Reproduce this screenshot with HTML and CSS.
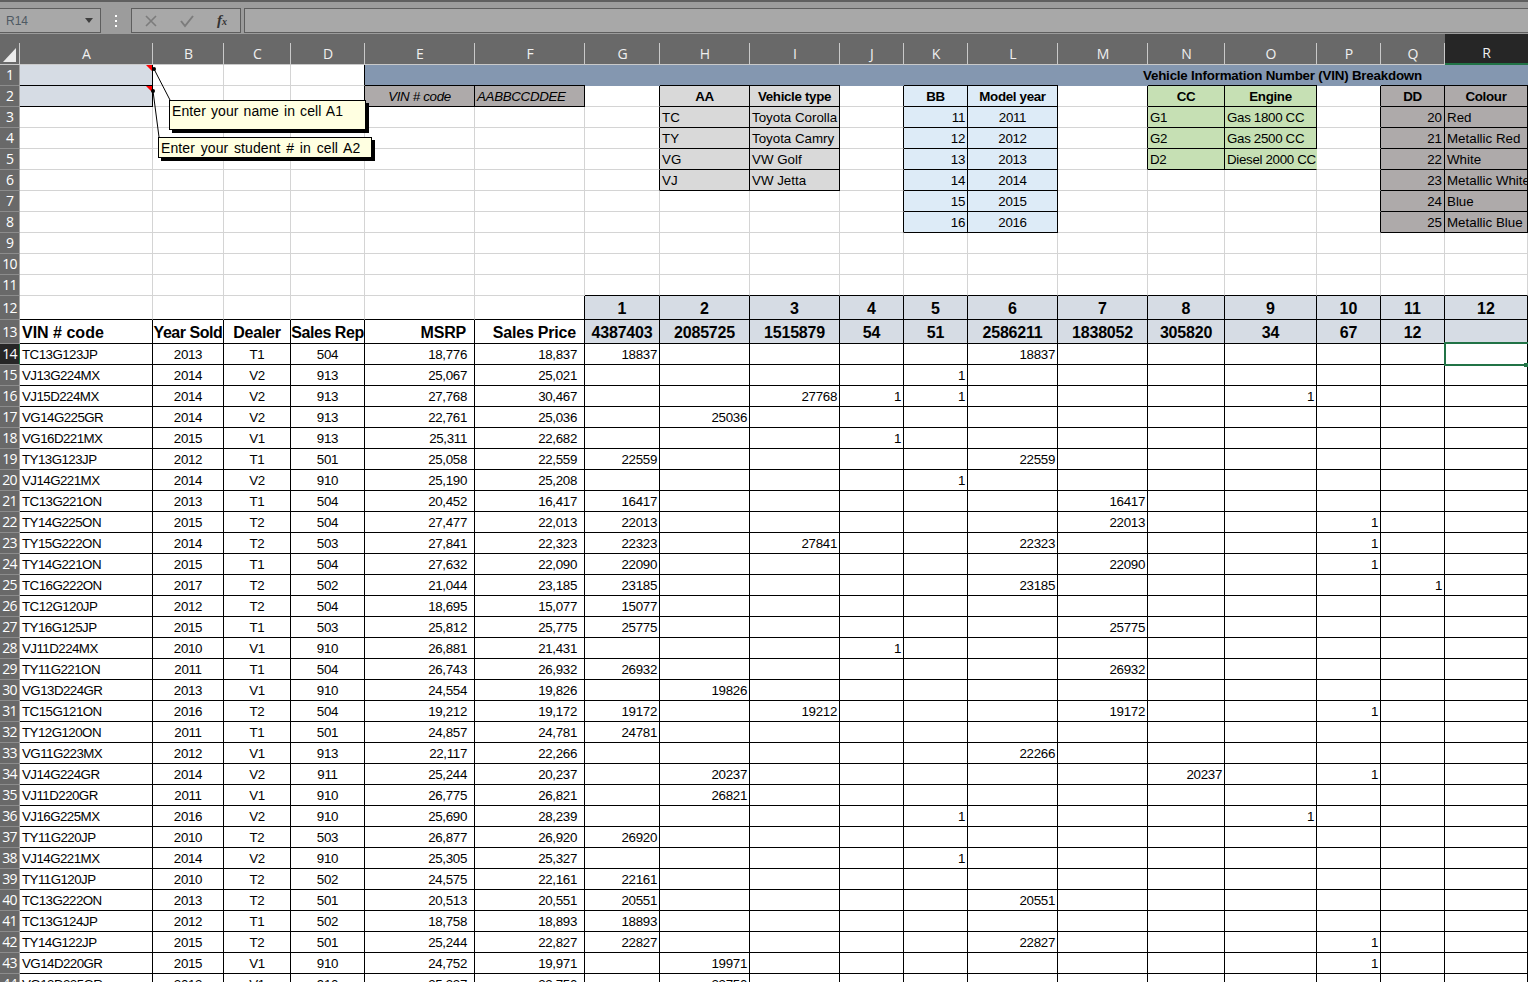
FILE: index.html
```html
<!DOCTYPE html>
<html>
<head>
  <title>VIN Breakdown</title>
  <meta charset="UTF-8">
  <link rel="stylesheet" href="styles.css">
</head>
<body>

<div class="bar">
  <div class="namebox">R14<span class="drop"></span></div>
  <div class="dots"><i></i><i></i><i></i></div>
  <div class="fxbox">
    <svg class="ico" width="14" height="14" viewBox="0 0 14 14"><path d="M2 2l10 10M12 2L2 12" stroke="#7c7c7c" stroke-width="1.6" fill="none"/></svg>
    <svg class="ico" width="16" height="14" viewBox="0 0 16 14"><path d="M2 7l4 5 8-10" stroke="#7c7c7c" stroke-width="2" fill="none"/></svg>
    <span class="fx">f<small>x</small></span>
  </div>
  <div class="formula"></div>
</div>

<div class="sheet">
<table class="grid">
  <colgroup>
    <col class="c20"><col class="c133"><col class="c71"><col class="c67"><col class="c74"><col class="c110"><col class="c110">
    <col class="c75"><col class="c90"><col class="c90"><col class="c64"><col class="c64"><col class="c90"><col class="c90">
    <col class="c77"><col class="c92"><col class="c64"><col class="c64"><col class="c83">
  </colgroup>
  <tr class="head">
    <th class="corner"><svg width="20" height="30" viewBox="0 0 20 30"><path d="M16 14v14H3z" fill="#ececec"/></svg>
    <th>A<th>B<th>C<th>D<th>E<th>F<th>G<th>H<th>I<th>J<th>K<th>L<th>M<th>N<th>O<th>P<th>Q<th class="on">R
  <tr><th>1<td class="ac box"><td><td><td class="r"><td class="band" colspan="14">Vehicle Information Number (VIN) Breakdown
  <tr><th>2<td class="ac box"><td><td><td class="r"><td class="gr box tp it mid">VIN # code<td class="gr box tp it">AABBCCDDEE<td class="r"><td class="si box tp hd">AA<td class="si box tp hd">Vehicle type<td class="r"><td class="bl box tp hd">BB<td class="bl box tp hd">Model year<td class="r"><td class="gn box tp hd">CC<td class="gn box tp hd">Engine<td class="r"><td class="gr box tp hd">DD<td class="gr box tp hd">Colour
  <tr><th>3<td><td><td><td><td><td><td class="r"><td class="si box">TC<td class="si box">Toyota Corolla<td class="r"><td class="bl box num">11<td class="bl box mid">2011<td class="r"><td class="gn box">G1<td class="gn box">Gas 1800 CC<td class="r"><td class="gr box num">20<td class="gr box">Red
  <tr><th>4<td><td><td><td><td><td><td class="r"><td class="si box">TY<td class="si box">Toyota Camry<td class="r"><td class="bl box num">12<td class="bl box mid">2012<td class="r"><td class="gn box">G2<td class="gn box">Gas 2500 CC<td class="r"><td class="gr box num">21<td class="gr box">Metallic Red
  <tr><th>5<td><td><td><td><td><td><td class="r"><td class="si box">VG<td class="si box">VW Golf<td class="r"><td class="bl box num">13<td class="bl box mid">2013<td class="r"><td class="gn box">D2<td class="gn b open">Diesel 2000 CC<td class="r"><td class="gr box num">22<td class="gr box">White
  <tr><th>6<td><td><td><td><td><td><td class="r"><td class="si box">VJ<td class="si box">VW Jetta<td class="r"><td class="bl box num">14<td class="bl box mid">2014<td><td><td><td class="r"><td class="gr box num">23<td class="gr box">Metallic White
  <tr><th>7<td><td><td><td><td><td><td><td><td><td class="r"><td class="bl box num">15<td class="bl box mid">2015<td><td><td><td class="r"><td class="gr box num">24<td class="gr box">Blue
  <tr><th>8<td><td><td><td><td><td><td><td><td><td class="r"><td class="bl box num">16<td class="bl box mid">2016<td><td><td><td class="r"><td class="gr box num">25<td class="gr box">Metallic Blue
  <tr><th>9<td><td><td><td><td><td><td><td><td><td><td><td><td><td><td><td><td><td><td>
  <tr><th>10<td><td><td><td><td><td><td><td><td><td><td><td><td><td><td><td><td><td><td>
  <tr><th>11<td><td><td><td><td><td><td class="b"><td class="b"><td class="b"><td class="b"><td class="b"><td class="b"><td class="b"><td class="b"><td class="b"><td class="b"><td class="b"><td class="b">
  <tr class="tall"><th>12<td class="b"><td class="b"><td class="b"><td class="b"><td class="b"><td class="box"><td class="sum">1<td class="sum">2<td class="sum">3<td class="sum">4<td class="sum">5<td class="sum">6<td class="sum">7<td class="sum">8<td class="sum">9<td class="sum">10<td class="sum">11<td class="sum">12
  <tr class="tall titles"><th>13<td>VIN # code<td>Year Sold<td>Dealer<td>Sales Rep<td>MSRP<td>Sales Price<td class="sum">4387403<td class="sum">2085725<td class="sum">1515879<td class="sum">54<td class="sum">51<td class="sum">2586211<td class="sum">1838052<td class="sum">305820<td class="sum">34<td class="sum">67<td class="sum">12<td class="sum">

  <tr class="rec"><th class="on">14<td>TC13G123JP<td>2013<td>T1<td>504<td>18,776<td>18,837<td>18837<td><td><td><td><td>18837<td><td><td><td><td><td>
  <tr class="rec"><th>15<td>VJ13G224MX<td>2014<td>V2<td>913<td>25,067<td>25,021<td><td><td><td><td>1<td><td><td><td><td><td><td>
  <tr class="rec"><th>16<td>VJ15D224MX<td>2014<td>V2<td>913<td>27,768<td>30,467<td><td><td>27768<td>1<td>1<td><td><td><td>1<td><td><td>
  <tr class="rec"><th>17<td>VG14G225GR<td>2014<td>V2<td>913<td>22,761<td>25,036<td><td>25036<td><td><td><td><td><td><td><td><td><td>
  <tr class="rec"><th>18<td>VG16D221MX<td>2015<td>V1<td>913<td>25,311<td>22,682<td><td><td><td>1<td><td><td><td><td><td><td><td>
  <tr class="rec"><th>19<td>TY13G123JP<td>2012<td>T1<td>501<td>25,058<td>22,559<td>22559<td><td><td><td><td>22559<td><td><td><td><td><td>
  <tr class="rec"><th>20<td>VJ14G221MX<td>2014<td>V2<td>910<td>25,190<td>25,208<td><td><td><td><td>1<td><td><td><td><td><td><td>
  <tr class="rec"><th>21<td>TC13G221ON<td>2013<td>T1<td>504<td>20,452<td>16,417<td>16417<td><td><td><td><td><td>16417<td><td><td><td><td>
  <tr class="rec"><th>22<td>TY14G225ON<td>2015<td>T2<td>504<td>27,477<td>22,013<td>22013<td><td><td><td><td><td>22013<td><td><td>1<td><td>
  <tr class="rec"><th>23<td>TY15G222ON<td>2014<td>T2<td>503<td>27,841<td>22,323<td>22323<td><td>27841<td><td><td>22323<td><td><td><td>1<td><td>
  <tr class="rec"><th>24<td>TY14G221ON<td>2015<td>T1<td>504<td>27,632<td>22,090<td>22090<td><td><td><td><td><td>22090<td><td><td>1<td><td>
  <tr class="rec"><th>25<td>TC16G222ON<td>2017<td>T2<td>502<td>21,044<td>23,185<td>23185<td><td><td><td><td>23185<td><td><td><td><td>1<td>
  <tr class="rec"><th>26<td>TC12G120JP<td>2012<td>T2<td>504<td>18,695<td>15,077<td>15077<td><td><td><td><td><td><td><td><td><td><td>
  <tr class="rec"><th>27<td>TY16G125JP<td>2015<td>T1<td>503<td>25,812<td>25,775<td>25775<td><td><td><td><td><td>25775<td><td><td><td><td>
  <tr class="rec"><th>28<td>VJ11D224MX<td>2010<td>V1<td>910<td>26,881<td>21,431<td><td><td><td>1<td><td><td><td><td><td><td><td>
  <tr class="rec"><th>29<td>TY11G221ON<td>2011<td>T1<td>504<td>26,743<td>26,932<td>26932<td><td><td><td><td><td>26932<td><td><td><td><td>
  <tr class="rec"><th>30<td>VG13D224GR<td>2013<td>V1<td>910<td>24,554<td>19,826<td><td>19826<td><td><td><td><td><td><td><td><td><td>
  <tr class="rec"><th>31<td>TC15G121ON<td>2016<td>T2<td>504<td>19,212<td>19,172<td>19172<td><td>19212<td><td><td><td>19172<td><td><td>1<td><td>
  <tr class="rec"><th>32<td>TY12G120ON<td>2011<td>T1<td>501<td>24,857<td>24,781<td>24781<td><td><td><td><td><td><td><td><td><td><td>
  <tr class="rec"><th>33<td>VG11G223MX<td>2012<td>V1<td>913<td>22,117<td>22,266<td><td><td><td><td><td>22266<td><td><td><td><td><td>
  <tr class="rec"><th>34<td>VJ14G224GR<td>2014<td>V2<td>911<td>25,244<td>20,237<td><td>20237<td><td><td><td><td><td>20237<td><td>1<td><td>
  <tr class="rec"><th>35<td>VJ11D220GR<td>2011<td>V1<td>910<td>26,775<td>26,821<td><td>26821<td><td><td><td><td><td><td><td><td><td>
  <tr class="rec"><th>36<td>VJ16G225MX<td>2016<td>V2<td>910<td>25,690<td>28,239<td><td><td><td><td>1<td><td><td><td>1<td><td><td>
  <tr class="rec"><th>37<td>TY11G220JP<td>2010<td>T2<td>503<td>26,877<td>26,920<td>26920<td><td><td><td><td><td><td><td><td><td><td>
  <tr class="rec"><th>38<td>VJ14G221MX<td>2014<td>V2<td>910<td>25,305<td>25,327<td><td><td><td><td>1<td><td><td><td><td><td><td>
  <tr class="rec"><th>39<td>TY11G120JP<td>2010<td>T2<td>502<td>24,575<td>22,161<td>22161<td><td><td><td><td><td><td><td><td><td><td>
  <tr class="rec"><th>40<td>TC13G222ON<td>2013<td>T2<td>501<td>20,513<td>20,551<td>20551<td><td><td><td><td>20551<td><td><td><td><td><td>
  <tr class="rec"><th>41<td>TC13G124JP<td>2012<td>T1<td>502<td>18,758<td>18,893<td>18893<td><td><td><td><td><td><td><td><td><td><td>
  <tr class="rec"><th>42<td>TY14G122JP<td>2015<td>T2<td>501<td>25,244<td>22,827<td>22827<td><td><td><td><td>22827<td><td><td><td>1<td><td>
  <tr class="rec"><th>43<td>VG14D220GR<td>2015<td>V1<td>910<td>24,752<td>19,971<td><td>19971<td><td><td><td><td><td><td><td>1<td><td>
  <tr class="rec"><th>44<td>VG13D225GR<td>2013<td>V1<td>910<td>25,337<td>23,750<td><td>23750<td><td><td><td><td><td><td><td><td><td>
</table>

<!-- comment flags and their leader lines, coordinates are page pixels -->
<svg class="marks" width="400" height="170" viewBox="0 0 400 170">
  <path d="M146 65h6v6zM146 86h6v6z" fill="#f00"/>
  <path d="M154 69L170 100M153 91L159 137" stroke="#000" stroke-width="1" fill="none"/>
  <circle cx="154" cy="69" r="2" fill="#000"/>
  <circle cx="153" cy="91" r="2" fill="#000"/>
</svg>
<div class="note note1">Enter your name in cell A1</div>
<div class="note note2">Enter your student # in cell A2</div>
<div class="cursor"><span class="handle"></span></div>
</div>

</body>
</html>
```

FILE: styles.css
```css
html, body {
  margin: 0;
  padding: 0;
  height: 982px;
  overflow: hidden;
  background: #fff;
  font-family: "Liberation Sans", Arial, sans-serif;
}

/* formula bar */
.bar {
  display: flex;
  align-items: stretch;
  box-sizing: border-box;
  height: 34px;
  padding: 6px 0 1px;
  border-top: 2px solid #5f5f5f;
  background: #9c9c9c;
}
.namebox {
  position: relative;
  box-sizing: border-box;
  width: 101px;
  padding-left: 6px;
  border: 1px solid #5e5e5e;
  border-left: none;
  background: #a8a8a8;
  color: #4f5a63;
  font-size: 12px;
  line-height: 24px;
}
.drop {
  position: absolute;
  right: 7px;
  top: 9px;
  border: 4px solid transparent;
  border-top: 5px solid #3f3f3f;
  border-bottom: none;
}
.dots {
  display: flex;
  flex-direction: column;
  justify-content: center;
  gap: 3px;
  width: 30px;
  padding-left: 14px;
  box-sizing: border-box;
}
.dots i {
  display: block;
  width: 2px;
  height: 2px;
  background: #fff;
}
.fxbox {
  display: flex;
  align-items: center;
  box-sizing: border-box;
  width: 110px;
  padding-left: 12px;
  gap: 21px;
  border: 1px solid #5e5e5e;
  background: #a8a8a8;
}
.fx {
  margin-left: 1px;
  font: italic bold 15px "Liberation Serif", serif;
  color: #333;
}
.fx small { font-size: 10px; }
.formula {
  flex: 1;
  margin-left: 3px;
  border: 1px solid #5e5e5e;
  border-right: none;
  background: #a8a8a8;
}

/* sheet */
.sheet {
  position: relative;
}
.grid {
  table-layout: fixed;
  width: 1528px;
  border-collapse: separate;
  border-spacing: 0;
  font-size: 13.33px;
  letter-spacing: -0.32px;
  color: #000;
}
.c20 { width: 20px; }
.c64 { width: 64px; }
.c67 { width: 67px; }
.c71 { width: 71px; }
.c74 { width: 74px; }
.c75 { width: 75px; }
.c77 { width: 77px; }
.c83 { width: 83px; }
.c90 { width: 90px; }
.c92 { width: 92px; }
.c110 { width: 110px; }
.c133 { width: 133px; }

td {
  box-sizing: border-box;
  height: 21px;
  padding: 0 2px 1px;
  border-right: 1px solid #d4d4d4;
  border-bottom: 1px solid #d4d4d4;
  line-height: 16px;
  vertical-align: bottom;
  white-space: nowrap;
}
th {
  box-sizing: border-box;
  height: 21px;
  padding: 0;
  border-right: 1px solid #a6a6a6;
  border-bottom: 1px solid #8c8c8c;
  background: #696969;
  color: #fff;
  font: 14px/20px "Open Sans", sans-serif;
  letter-spacing: -0.8px;
  text-align: center;
  overflow: hidden;
}
th.on { background: #262626; border-right-color: #217346; }

.head th {
  height: 31px;
  border-right: none;
  border-bottom: 1px solid #c9c9c9;
  background: #696969 linear-gradient(#c9c9c9, #c9c9c9) right bottom / 1px 21px no-repeat;
  color: #f0f0f0;
  letter-spacing: 0;
  vertical-align: bottom;
}
.head th.on {
  border-bottom: 2px solid #217346;
  background: #262626;
}
.corner svg { display: block; }

/* border helpers */
.r { border-right-color: #000; }
.b { border-bottom-color: #000; }
.box { border-right-color: #000; border-bottom-color: #000; }
.tp { box-shadow: 0 -1px 0 #000; }
.open { border-right-color: #c6e0b4; }

/* fills */
.ac { background: #d6dce4; }
.gr { background: #aeaaaa; letter-spacing: 0; }
.si { background: #d9d9d9; letter-spacing: 0; }
.bl { background: #ddebf7; }
.gn { background: #c6e0b4; }

.band {
  padding: 0 0 2px 672px;
  border-right: none;
  border-bottom: none;
  background: #8497b0;
  font-weight: bold;
  letter-spacing: -0.2px;
  text-align: center;
}
.it { font-style: italic; letter-spacing: -0.32px; }
.mid { text-align: center; }
.num { text-align: right; }
.hd { font-weight: bold; letter-spacing: -0.32px; text-align: center; }

/* rows 12 and 13 */
.tall td { height: 24px; }
.tall td, .tall th { line-height: 18px; }
.tall th { height: 24px; }
.sum {
  border-right-color: #000;
  border-bottom-color: #000;
  background: #d6dce4;
  font-size: 16px;
  font-weight: bold;
  letter-spacing: 0;
  text-align: center;
}
.titles td {
  border-right-color: #000;
  border-bottom-color: #000;
  font-size: 16px;
  font-weight: bold;
  text-align: center;
  letter-spacing: -0.2px;
}
.titles td:nth-child(2) { letter-spacing: 0; text-align: left; }
.titles td:nth-child(3),
.titles td:nth-child(5) { padding: 0 0 1px; letter-spacing: -0.45px; }
.titles td:nth-child(6),
.titles td:nth-child(7) { padding-right: 8px; text-align: right; }

/* record rows */
.rec td {
  border-right-color: #000;
  border-bottom-color: #000;
  text-align: right;
}
.rec td:nth-child(2) { letter-spacing: -0.55px; text-align: left; }
.rec td:nth-child(3),
.rec td:nth-child(4),
.rec td:nth-child(5) { text-align: center; }
.rec td:nth-child(6),
.rec td:nth-child(7) { padding-right: 7px; }

/* things lying over the cells */
.marks {
  position: absolute;
  left: 0;
  top: -34px;
  pointer-events: none;
}
.note {
  position: absolute;
  box-sizing: border-box;
  padding: 1px 2px;
  border: 1px solid #000;
  background: #ffffe1;
  box-shadow: 3px 3px 0 #000;
  font-size: 14px;
  letter-spacing: 0.1px;
  word-spacing: 1px;
  line-height: 18px;
  white-space: nowrap;
}
.note1 { left: 169px; top: 66px; width: 197px; height: 30px; }
.note2 { left: 158px; top: 103px; width: 214px; height: 21px; word-spacing: 1.7px; }
.cursor {
  position: absolute;
  left: 1444px;
  top: 308px;
  box-sizing: border-box;
  width: 84px;
  height: 24px;
  border: 2px solid #217346;
  border-right: none;
}
.handle {
  position: absolute;
  right: 0;
  bottom: -3px;
  width: 4px;
  height: 4px;
  background: #217346;
}
```
